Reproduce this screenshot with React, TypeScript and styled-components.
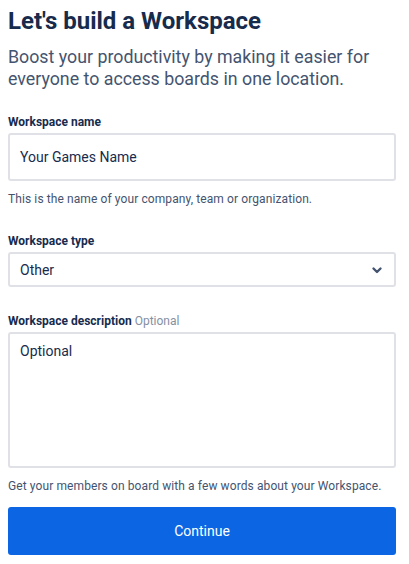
import React from "react";
import styled, { createGlobalStyle } from "styled-components";

const Global = createGlobalStyle`
  html, body { margin: 0; padding: 0; background: #ffffff; }
  body { font-family: Roboto, "Noto Sans", Arial, sans-serif; color: #172b4d; }
  * { box-sizing: border-box; }
`;

const Page = styled.div`
  width: 388px;
  margin: 0 0 0 8px;
  padding-top: 6px;
  display: flex;
  flex-direction: column;
`;

const Title = styled.h1`
  margin: 0;
  font-size: 24px;
  line-height: 30px;
  font-weight: 700;
  color: #172b4d;
`;

const Lead = styled.p`
  margin: 10px 0 0;
  font-size: 17.8px;
  line-height: 22px;
  font-weight: 400;
  color: #44546f;
`;

const Form = styled.form`
  display: flex;
  flex-direction: column;
  margin-top: 24px;
`;

const Field = styled.div<{ $gap?: number }>`
  display: flex;
  flex-direction: column;
  margin-top: ${(p) => p.$gap ?? 0}px;
`;

const Label = styled.label`
  font-size: 12px;
  line-height: 16px;
  font-weight: 700;
  color: #172b4d;
  margin-bottom: 3px;
`;

const Optional = styled.span`
  font-weight: 400;
  color: #8590a2;
  margin-left: 3px;
`;

const Box = styled.div<{ $h: number }>`
  height: ${(p) => p.$h}px;
  border: 2px solid #dfe1e6;
  border-radius: 3px;
  background: #fff;
  display: flex;
  align-items: center;
  padding: 0 10px;
  font-size: 14px;
  color: #172b4d;
`;

const Select = styled(Box)`
  justify-content: space-between;
  padding-right: 10px;
`;

const TextArea = styled(Box)`
  align-items: flex-start;
  padding-top: 9px;
`;

const Help = styled.div`
  font-size: 12px;
  line-height: 16px;
  letter-spacing: 0.1px;
  color: #44546f;
  margin-top: 10px;
`;

const Button = styled.button`
  margin-top: 13px;
  height: 48px;
  border: none;
  border-radius: 3px;
  background: #0c66e4;
  color: #fff;
  font-family: inherit;
  font-size: 14px;
  width: 100%;
`;

const Chevron = () => (
  <svg width="14" height="14" viewBox="0 0 14 14" fill="none">
    <path d="M3.5 5.5l3.5 3.5 3.5-3.5" stroke="#44546f" strokeWidth="2.4" strokeLinecap="round" strokeLinejoin="round" />
  </svg>
);

export default function App() {
  return (
    <>
      <Global />
      <Page>
        <Title>Let's build a Workspace</Title>
        <Lead>Boost your productivity by making it easier for everyone to access boards in one location.</Lead>
        <Form onSubmit={(e) => e.preventDefault()}>
          <Field>
            <Label>Workspace name</Label>
            <Box $h={48}>Your Games Name</Box>
            <Help>This is the name of your company, team or organization.</Help>
          </Field>
          <Field $gap={26}>
            <Label>Workspace type</Label>
            <Select $h={35}>
              <span>Other</span>
              <Chevron />
            </Select>
          </Field>
          <Field $gap={26}>
            <Label>
              Workspace description<Optional>Optional</Optional>
            </Label>
            <TextArea $h={136}>Optional</TextArea>
            <Help>Get your members on board with a few words about your Workspace.</Help>
          </Field>
          <Button type="submit">Continue</Button>
        </Form>
      </Page>
    </>
  );
}
